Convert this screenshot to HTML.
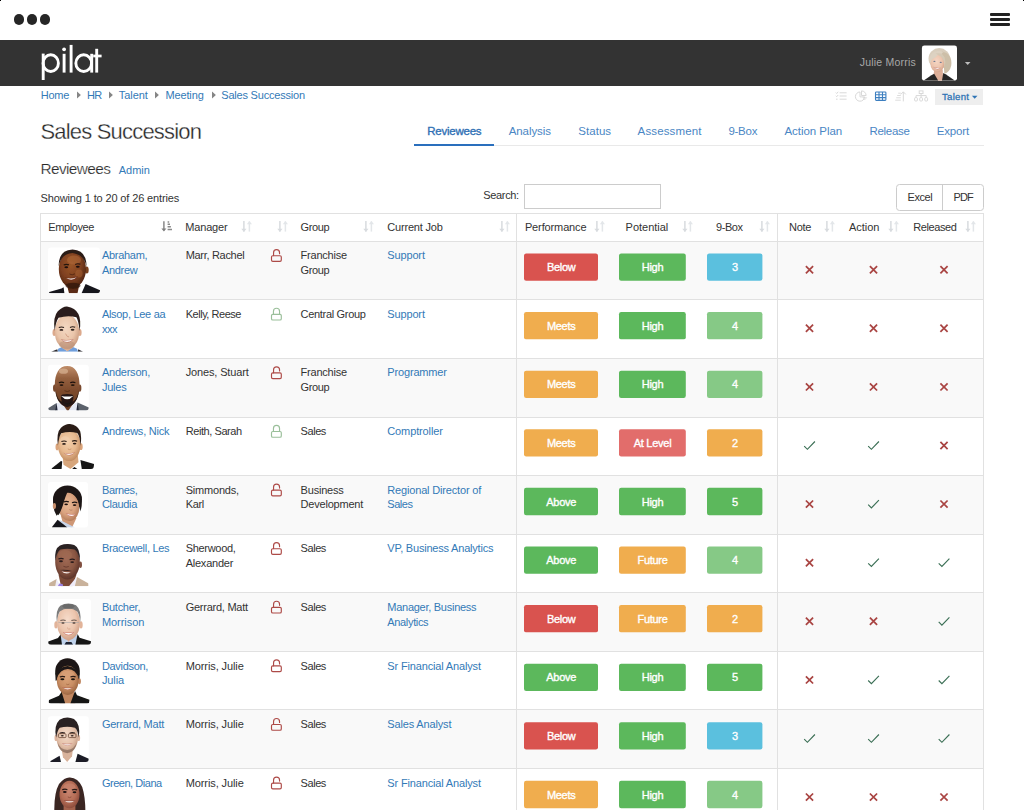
<!DOCTYPE html>
<html><head><meta charset="utf-8"><title>Sales Succession</title>
<style>
html,body{margin:0;padding:0;background:#fff;}
body{width:1024px;height:810px;overflow:hidden;position:relative;font-family:"Liberation Sans", sans-serif;}
.t{position:absolute;white-space:pre;line-height:1;font-family:"Liberation Sans", sans-serif;}
</style></head><body>
<div style="position:absolute;left:0;top:0;width:1024px;height:40px;background:#fff"></div>
<div style="position:absolute;left:13.8px;top:14.2px;width:10.4px;height:10.4px;border-radius:50%;background:#262626"></div>
<div style="position:absolute;left:26.8px;top:14.2px;width:10.4px;height:10.4px;border-radius:50%;background:#262626"></div>
<div style="position:absolute;left:39.8px;top:14.2px;width:10.4px;height:10.4px;border-radius:50%;background:#262626"></div>
<div style="position:absolute;left:990px;top:13px;width:20px;height:3px;border-radius:1px;background:#222"></div>
<div style="position:absolute;left:990px;top:18px;width:20px;height:3px;border-radius:1px;background:#222"></div>
<div style="position:absolute;left:990px;top:23px;width:20px;height:3px;border-radius:1px;background:#222"></div>
<div style="position:absolute;left:0;top:0;width:1px;height:1px;background:#000"></div>
<div style="position:absolute;left:1023px;top:0;width:1px;height:1px;background:#000"></div>
<div style="position:absolute;left:0;top:40px;width:1024px;height:45.7px;background:#333"></div>
<svg style="position:absolute;left:38px;top:42px" width="70" height="42" viewBox="38 42 70 42" fill="none" stroke="#fff" stroke-width="2.9">
<line x1="43.2" y1="53.6" x2="43.2" y2="80"/>
<ellipse cx="50.75" cy="63.15" rx="7.65" ry="8.4"/>
<line x1="64.1" y1="53.8" x2="64.1" y2="72.6"/>
<circle cx="64.1" cy="49.3" r="1.9" fill="#fff" stroke="none"/>
<line x1="71.1" y1="44.9" x2="71.1" y2="72.6"/>
<ellipse cx="83.7" cy="63.15" rx="7.85" ry="8.4"/>
<line x1="91.7" y1="53.8" x2="91.7" y2="72.6"/>
<line x1="96.7" y1="48.8" x2="96.7" y2="72.6"/>
<line x1="93.2" y1="56" x2="101.6" y2="56" stroke-width="2.7"/>
</svg>
<svg style="position:absolute;left:962px;top:59px" width="12" height="9" viewBox="962 59 12 9"><path d="M964.9 61.9H970.5L967.7 65.1Z" fill="#bdbdbd"/></svg>
<svg style="position:absolute;left:74.8px;top:89px" width="9" height="12" viewBox="74.8 89 9 12"><path d="M76.8 91.4V98.4L80.7 94.9Z" fill="#858585"/></svg>
<svg style="position:absolute;left:107.0px;top:89px" width="9" height="12" viewBox="107.0 89 9 12"><path d="M109.0 91.4V98.4L112.9 94.9Z" fill="#858585"/></svg>
<svg style="position:absolute;left:153.4px;top:89px" width="9" height="12" viewBox="153.4 89 9 12"><path d="M155.4 91.4V98.4L159.3 94.9Z" fill="#858585"/></svg>
<svg style="position:absolute;left:210.2px;top:89px" width="9" height="12" viewBox="210.2 89 9 12"><path d="M212.2 91.4V98.4L216.1 94.9Z" fill="#858585"/></svg>
<svg style="position:absolute;left:834px;top:88px" width="96" height="16" viewBox="834 88 96 16" fill="none" stroke="#d9d9d9" stroke-width="1">
<path d="M839.6 92.8H846.6M839.6 96H846.6M839.6 99.2H846.6"/>
<path d="M835.8 92.6l0.9 0.9 1.5-1.7M835.8 95.8l0.9 0.9 1.5-1.7M836 99.2h1.6"/>
<path d="M860 92 A4.6 4.6 0 1 0 864.6 96.9 L860 96.9Z"/>
<path d="M861.5 90.9 A4.6 4.6 0 0 1 866.1 95.5 L861.5 95.5Z"/>
<path d="M863 97.6h3.6l-1.8 2.2z" stroke-width="0.7"/>
<path d="M898.2 93.2H900.8M897.2 95.5H900.8M896.2 97.8H900.8M895.2 100.2H900.8" stroke-width="0.9"/>
<path d="M903.3 101.4V92M900.8 94.4l2.5-2.6 2.5 2.6"/>
<rect x="919.2" y="90.9" width="3.8" height="2.6"/>
<path d="M921.1 93.5V97.6M916 97.6V95.6H926.2V97.6"/>
<rect x="914.6" y="97.6" width="2.8" height="3.4" rx="1"/><rect x="919.7" y="97.6" width="2.8" height="3.4" rx="1"/><rect x="924.8" y="97.6" width="2.8" height="3.4" rx="1"/>
</svg>
<svg style="position:absolute;left:874px;top:90px" width="14" height="12" viewBox="874 90 14 12" fill="none" stroke="#3d7fc0" stroke-width="1.1">
<rect x="875.5" y="92" width="10.4" height="8.4" rx="0.8"/>
<path d="M879 92V100.4M882.5 92V100.4M875.5 94.8H885.9M875.5 97.6H885.9"/>
</svg>
<div style="position:absolute;left:935px;top:89px;width:48.4px;height:15.7px;background:#eee"></div>
<svg style="position:absolute;left:969px;top:93px" width="12" height="9" viewBox="969 93 12 9"><path d="M971.9 95.8H977.5L974.7 98.7Z" fill="#2f74b5"/></svg>
<div style="position:absolute;left:414px;top:144.5px;width:570px;height:1px;background:#e9e9e9"></div>
<div style="position:absolute;left:414px;top:143.5px;width:79.8px;height:2px;background:#2a6fbd"></div>
<div style="position:absolute;left:524px;top:184px;width:137px;height:25px;box-sizing:border-box;border:1px solid #ccc;background:#fff"></div>
<div style="position:absolute;left:896.3px;top:184.2px;width:87.3px;height:26.4px;box-sizing:border-box;border:1px solid #ccc;border-radius:3.5px;background:#fff"></div>
<div style="position:absolute;left:942.2px;top:184.2px;width:1px;height:26.4px;background:#ccc"></div>
<div style="position:absolute;left:40px;top:213px;width:944px;height:600px;background:#fff"></div>
<div style="position:absolute;left:40px;top:241px;width:944px;height:58px;background:#f9f9f9"></div>
<div style="position:absolute;left:40px;top:299px;width:944px;height:59px;background:#fff"></div>
<div style="position:absolute;left:40px;top:358px;width:944px;height:59px;background:#f9f9f9"></div>
<div style="position:absolute;left:40px;top:417px;width:944px;height:58px;background:#fff"></div>
<div style="position:absolute;left:40px;top:475px;width:944px;height:59px;background:#f9f9f9"></div>
<div style="position:absolute;left:40px;top:534px;width:944px;height:58px;background:#fff"></div>
<div style="position:absolute;left:40px;top:592px;width:944px;height:59px;background:#f9f9f9"></div>
<div style="position:absolute;left:40px;top:651px;width:944px;height:58px;background:#fff"></div>
<div style="position:absolute;left:40px;top:709px;width:944px;height:59px;background:#f9f9f9"></div>
<div style="position:absolute;left:40px;top:768px;width:944px;height:59px;background:#fff"></div>
<div style="position:absolute;left:40px;top:213px;width:944px;height:1px;background:#e1e1e1"></div>
<div style="position:absolute;left:40px;top:241px;width:944px;height:1px;background:#e1e1e1"></div>
<div style="position:absolute;left:40px;top:299px;width:944px;height:1px;background:#e1e1e1"></div>
<div style="position:absolute;left:40px;top:358px;width:944px;height:1px;background:#e1e1e1"></div>
<div style="position:absolute;left:40px;top:417px;width:944px;height:1px;background:#e1e1e1"></div>
<div style="position:absolute;left:40px;top:475px;width:944px;height:1px;background:#e1e1e1"></div>
<div style="position:absolute;left:40px;top:534px;width:944px;height:1px;background:#e1e1e1"></div>
<div style="position:absolute;left:40px;top:592px;width:944px;height:1px;background:#e1e1e1"></div>
<div style="position:absolute;left:40px;top:651px;width:944px;height:1px;background:#e1e1e1"></div>
<div style="position:absolute;left:40px;top:709px;width:944px;height:1px;background:#e1e1e1"></div>
<div style="position:absolute;left:40px;top:768px;width:944px;height:1px;background:#e1e1e1"></div>
<div style="position:absolute;left:40px;top:827px;width:944px;height:1px;background:#e1e1e1"></div>
<div style="position:absolute;left:40px;top:213px;width:1px;height:600px;background:#e1e1e1"></div>
<div style="position:absolute;left:516px;top:213px;width:1px;height:600px;background:#e1e1e1"></div>
<div style="position:absolute;left:777px;top:213px;width:1px;height:600px;background:#e1e1e1"></div>
<div style="position:absolute;left:983px;top:213px;width:1px;height:600px;background:#e1e1e1"></div>
<svg style="position:absolute;left:240px;top:219px" width="14" height="15" viewBox="240 219 14 15" fill="none" stroke-linecap="butt"><path d="M243.9 221V231.4" stroke="#d8dbdf" stroke-width="1.5"/><path d="M241.3 228.8H246.5L243.9 231.9Z" fill="#d8dbdf" stroke="none"/><path d="M249.4 231.6V221.4" stroke="#e3e6e9" stroke-width="1.5"/><path d="M246.8 224.2H252.0L249.4 221Z" fill="#e3e6e9" stroke="none"/></svg>
<svg style="position:absolute;left:275.5px;top:219px" width="14" height="15" viewBox="275.5 219 14 15" fill="none" stroke-linecap="butt"><path d="M279.4 221V231.4" stroke="#d8dbdf" stroke-width="1.5"/><path d="M276.79999999999995 228.8H282.0L279.4 231.9Z" fill="#d8dbdf" stroke="none"/><path d="M284.9 231.6V221.4" stroke="#e3e6e9" stroke-width="1.5"/><path d="M282.29999999999995 224.2H287.5L284.9 221Z" fill="#e3e6e9" stroke="none"/></svg>
<svg style="position:absolute;left:361.7px;top:219px" width="14" height="15" viewBox="361.7 219 14 15" fill="none" stroke-linecap="butt"><path d="M365.59999999999997 221V231.4" stroke="#d8dbdf" stroke-width="1.5"/><path d="M362.99999999999994 228.8H368.2L365.59999999999997 231.9Z" fill="#d8dbdf" stroke="none"/><path d="M371.09999999999997 231.6V221.4" stroke="#e3e6e9" stroke-width="1.5"/><path d="M368.49999999999994 224.2H373.7L371.09999999999997 221Z" fill="#e3e6e9" stroke="none"/></svg>
<svg style="position:absolute;left:497.6px;top:219px" width="14" height="15" viewBox="497.6 219 14 15" fill="none" stroke-linecap="butt"><path d="M501.5 221V231.4" stroke="#d8dbdf" stroke-width="1.5"/><path d="M498.9 228.8H504.1L501.5 231.9Z" fill="#d8dbdf" stroke="none"/><path d="M507.0 231.6V221.4" stroke="#e3e6e9" stroke-width="1.5"/><path d="M504.4 224.2H509.6L507.0 221Z" fill="#e3e6e9" stroke="none"/></svg>
<svg style="position:absolute;left:593.4px;top:219px" width="14" height="15" viewBox="593.4 219 14 15" fill="none" stroke-linecap="butt"><path d="M597.3 221V231.4" stroke="#d8dbdf" stroke-width="1.5"/><path d="M594.6999999999999 228.8H599.9L597.3 231.9Z" fill="#d8dbdf" stroke="none"/><path d="M602.8 231.6V221.4" stroke="#e3e6e9" stroke-width="1.5"/><path d="M600.1999999999999 224.2H605.4L602.8 221Z" fill="#e3e6e9" stroke="none"/></svg>
<svg style="position:absolute;left:681px;top:219px" width="14" height="15" viewBox="681 219 14 15" fill="none" stroke-linecap="butt"><path d="M684.9 221V231.4" stroke="#d8dbdf" stroke-width="1.5"/><path d="M682.3 228.8H687.5L684.9 231.9Z" fill="#d8dbdf" stroke="none"/><path d="M690.4 231.6V221.4" stroke="#e3e6e9" stroke-width="1.5"/><path d="M687.8 224.2H693.0L690.4 221Z" fill="#e3e6e9" stroke="none"/></svg>
<svg style="position:absolute;left:758px;top:219px" width="14" height="15" viewBox="758 219 14 15" fill="none" stroke-linecap="butt"><path d="M761.9 221V231.4" stroke="#d8dbdf" stroke-width="1.5"/><path d="M759.3 228.8H764.5L761.9 231.9Z" fill="#d8dbdf" stroke="none"/><path d="M767.4 231.6V221.4" stroke="#e3e6e9" stroke-width="1.5"/><path d="M764.8 224.2H770.0L767.4 221Z" fill="#e3e6e9" stroke="none"/></svg>
<svg style="position:absolute;left:823px;top:219px" width="14" height="15" viewBox="823 219 14 15" fill="none" stroke-linecap="butt"><path d="M826.9 221V231.4" stroke="#d8dbdf" stroke-width="1.5"/><path d="M824.3 228.8H829.5L826.9 231.9Z" fill="#d8dbdf" stroke="none"/><path d="M832.4 231.6V221.4" stroke="#e3e6e9" stroke-width="1.5"/><path d="M829.8 224.2H835.0L832.4 221Z" fill="#e3e6e9" stroke="none"/></svg>
<svg style="position:absolute;left:886.6px;top:219px" width="14" height="15" viewBox="886.6 219 14 15" fill="none" stroke-linecap="butt"><path d="M890.5 221V231.4" stroke="#d8dbdf" stroke-width="1.5"/><path d="M887.9 228.8H893.1L890.5 231.9Z" fill="#d8dbdf" stroke="none"/><path d="M896.0 231.6V221.4" stroke="#e3e6e9" stroke-width="1.5"/><path d="M893.4 224.2H898.6L896.0 221Z" fill="#e3e6e9" stroke="none"/></svg>
<svg style="position:absolute;left:963.9px;top:219px" width="14" height="15" viewBox="963.9 219 14 15" fill="none" stroke-linecap="butt"><path d="M967.8 221V231.4" stroke="#d8dbdf" stroke-width="1.5"/><path d="M965.1999999999999 228.8H970.4L967.8 231.9Z" fill="#d8dbdf" stroke="none"/><path d="M973.3 231.6V221.4" stroke="#e3e6e9" stroke-width="1.5"/><path d="M970.6999999999999 224.2H975.9L973.3 221Z" fill="#e3e6e9" stroke="none"/></svg>
<svg style="position:absolute;left:160px;top:219px" width="14" height="15" viewBox="160 219 14 15" fill="none">
<path d="M163.9 221.3V230.6" stroke="#808080" stroke-width="1.4"/><path d="M161.4 228.4H166.4L163.9 231.6Z" fill="#808080"/>
<path d="M167.6 222h1.6M167.6 224.3h2.4M167.6 226.7h3.3M167.6 229.6h4.4" stroke="#8a8a8a" stroke-width="1.5"/>
</svg>
<svg style="position:absolute;left:0;top:0" width="1024" height="810" viewBox="0 0 1024 810"><g transform="translate(921.9 45.6) scale(0.9915)">
<defs><clipPath id="uc"><rect x="0" y="0" width="35.4" height="35.4" rx="2.5"/></clipPath><filter id="ub"><feGaussianBlur stdDeviation="0.6"/></filter>
<radialGradient id="ug" cx="0.45" cy="0.4" r="0.65"><stop offset="0" stop-color="#f5d6c4"/><stop offset="0.6" stop-color="#ecc4ad"/><stop offset="1" stop-color="#cf9f88"/></radialGradient></defs>
<rect width="35.4" height="35.4" rx="2.5" fill="#fff"/>
<g clip-path="url(#uc)"><g filter="url(#ub)">
<path d="M12.5 24 L11 35.4 L21.5 35.4 L21 24Z" fill="#dcae98"/>
<path d="M1.5 35.4 L9.5 30 L12.4 28.4 L16.5 35.4Z" fill="#262626"/>
<path d="M20.2 35.4 L21.6 27.6 L24 29 L33.5 35.4Z" fill="#262626"/>
<ellipse cx="17.5" cy="13" rx="10.8" ry="10.5" fill="#d9cebd"/>
<path d="M20 6 Q31 8 29.6 20 Q28 27 22.6 28.4 L22 18Z" fill="#cdbfa8"/>
<ellipse cx="15.6" cy="17.6" rx="7.1" ry="9.3" fill="url(#ug)"/>
<path d="M7.3 13 Q11 2.6 22 6.6 Q16 8.5 13.5 12 Q10 13 8 18Z" fill="#ddd2c2"/>
<path d="M14 8 Q20 6.5 23 12 Q24.5 17 22.8 22 Q22.6 14 19 11 Q16 9.6 14 8Z" fill="#d5c9b5"/>
<ellipse cx="12.6" cy="15.9" rx="1.15" ry="0.6" fill="#6a7690"/><ellipse cx="19" cy="16.9" rx="1.15" ry="0.6" fill="#6a7690"/>
<path d="M11.2 21.4 Q15 23 19.2 22.4 Q15.4 26 11.2 21.4Z" fill="#c98478"/>
<path d="M12 21.9 Q15 23.2 18.4 22.7 Q15.4 25 12 21.9Z" fill="#fff"/>
</g></g></g>
<g fill="none" stroke="#ad4a47" stroke-width="1.15" stroke-linecap="round"><path d="M273.55 255.60V252.65a3 3 0 0 1 6 0V253.70"/><rect x="271.5" y="255.70" width="9.8" height="5.7" rx="1.3"/></g>
<rect x="524" y="253.45" width="74" height="27.3" rx="2.2" fill="#d9534f"/>
<rect x="619" y="253.45" width="66.8" height="27.3" rx="2.2" fill="#5cb85c"/>
<rect x="707" y="253.45" width="55.4" height="27.3" rx="2.2" fill="#5bc0de"/>
<path transform="translate(809.5 269.70)" d="M-3.6 -3.6L3.6 3.6M3.6 -3.6L-3.6 3.6" stroke="#a94442" stroke-width="1.75" fill="none"/>
<path transform="translate(873.5 269.70)" d="M-3.6 -3.6L3.6 3.6M3.6 -3.6L-3.6 3.6" stroke="#a94442" stroke-width="1.75" fill="none"/>
<path transform="translate(944.0 269.70)" d="M-3.6 -3.6L3.6 3.6M3.6 -3.6L-3.6 3.6" stroke="#a94442" stroke-width="1.75" fill="none"/>
<g transform="translate(48 247.50)"><defs><clipPath id="ac0"><rect width="52" height="45.7" rx="3"/></clipPath><filter id="ab0" x="-10%" y="-10%" width="120%" height="120%"><feGaussianBlur stdDeviation="0.6"/></filter><radialGradient id="rg0" cx="0.45" cy="0.4" r="0.62"><stop offset="0" stop-color="#9a5528"/><stop offset="0.6" stop-color="#7e4020"/><stop offset="1" stop-color="#4f2410"/></radialGradient></defs><rect width="52" height="45.7" rx="3" fill="#fff"/><g clip-path="url(#ac0)"><g filter="url(#ab0)">
<path d="M18 34 L21 45.7 L29.5 45.7 L32 34Z" fill="#5a2a12"/>
<ellipse cx="38.8" cy="22.5" rx="1.9" ry="3.6" fill="#7a3f1e"/>
<ellipse cx="24.4" cy="21.6" rx="13.6" ry="18.6" fill="url(#rg0)"/>
<ellipse cx="26" cy="12.5" rx="7" ry="4.5" fill="#b06a38" opacity="0.55"/>
<ellipse cx="31" cy="26" rx="3.6" ry="4" fill="#a96232" opacity="0.5"/>
<path d="M10.6 19 Q10.4 2.4 24.5 2 Q38.8 2.4 38.6 20 Q36.8 7 24.5 5.4 Q13 6.2 10.6 19Z" fill="#2b1b16"/>
<ellipse cx="18.3" cy="19.8" rx="1.9" ry="1.0" fill="#1b0f0a"/><path d="M15.700000000000001 17.5Q18.3 16.3 20.900000000000002 17.4" stroke="#24140e" stroke-width="1.15" fill="none"/><ellipse cx="29.8" cy="19.2" rx="1.9" ry="1.0" fill="#1b0f0a"/><path d="M27.2 16.9Q29.8 15.699999999999998 32.4 16.799999999999997" stroke="#24140e" stroke-width="1.15" fill="none"/>
<path d="M21.5 26.5 Q24 28.2 27 26.3" stroke="#5b2a12" stroke-width="1" fill="none"/>
<path d="M16.8 30 Q23 31.2 30.2 28.8 Q24.5 36.5 16.8 30Z" fill="#6a2d1c"/>
<path d="M18.2 30.6 Q23.5 31.8 28.8 29.8 Q24 34.2 18.2 30.6Z" fill="#f3e7e0"/>
<ellipse cx="25" cy="38.2" rx="7.5" ry="3" fill="#2e150b" opacity="0.7"/>
<path d="M0.6 45.7 L1.2 44.6 L13.5 41 L15.6 39.8 L16.4 45.7Z" fill="#15151c"/>
<path d="M33.6 45.7 L37.6 36.4 L52 42.8 L52 45.7Z" fill="#15151c"/>
</g></g></g>
<g fill="none" stroke="#9abf9a" stroke-width="1.15" stroke-linecap="round"><path d="M273.45 314.20V311.30a3.05 3.05 0 0 1 6.1 0V314.20"/><rect x="271.5" y="314.30" width="9.8" height="5.7" rx="1.3"/></g>
<rect x="524" y="312.05" width="74" height="27.3" rx="2.2" fill="#f0ad4e"/>
<rect x="619" y="312.05" width="66.8" height="27.3" rx="2.2" fill="#5cb85c"/>
<rect x="707" y="312.05" width="55.4" height="27.3" rx="2.2" fill="#86c986"/>
<path transform="translate(809.5 328.30)" d="M-3.6 -3.6L3.6 3.6M3.6 -3.6L-3.6 3.6" stroke="#a94442" stroke-width="1.75" fill="none"/>
<path transform="translate(873.5 328.30)" d="M-3.6 -3.6L3.6 3.6M3.6 -3.6L-3.6 3.6" stroke="#a94442" stroke-width="1.75" fill="none"/>
<path transform="translate(944.0 328.30)" d="M-3.6 -3.6L3.6 3.6M3.6 -3.6L-3.6 3.6" stroke="#a94442" stroke-width="1.75" fill="none"/>
<g transform="translate(48 306.10)"><defs><clipPath id="ac1"><rect width="40" height="45.7" rx="3"/></clipPath><filter id="ab1" x="-10%" y="-10%" width="120%" height="120%"><feGaussianBlur stdDeviation="0.6"/></filter><radialGradient id="rg1" cx="0.45" cy="0.4" r="0.62"><stop offset="0" stop-color="#f4d8c2"/><stop offset="0.6" stop-color="#eac5aa"/><stop offset="1" stop-color="#c99a7e"/></radialGradient></defs><g clip-path="url(#ac1)"><g filter="url(#ab1)">
<path d="M9.5 45.7 L10.2 42.6 L14 41 L19 44.8 L25 40.8 L29 42.6 L30 45.7Z" fill="#6f9fdc"/>
<path d="M3.2 45.7 L9.3 43.2 L9.8 45.7Z" fill="#2d2d33"/><path d="M29.8 45.7 L30.3 43.2 L35 45.7Z" fill="#2d2d33"/>
<path d="M13 36 L14 42 L19.5 45.2 L25 41.5 L26 36Z" fill="#d9ab8e"/>
<ellipse cx="6.2" cy="26.5" rx="1.7" ry="3.5" fill="#dca98c"/><ellipse cx="31.9" cy="26.5" rx="1.7" ry="3.5" fill="#dca98c"/>
<ellipse cx="19" cy="25.8" rx="12.2" ry="17.2" fill="url(#rg1)"/>
<ellipse cx="19" cy="38.6" rx="8" ry="4" fill="#b89079" opacity="0.55"/>
<path d="M6.6 25 Q4.8 10.5 9.8 5.2 Q15 0.2 19 0.5 Q27.2 1.8 30.4 8 Q33.4 14 31.6 25 Q30.6 14.5 28.4 11.2 Q20 8.8 10.6 11.6 Q7.8 15.4 6.6 25Z" fill="#2c1f1b"/>
<ellipse cx="13.4" cy="23.8" rx="1.9" ry="0.95" fill="#2e211c"/><path d="M10.8 21.5Q13.4 20.3 16.0 21.4" stroke="#2a1d18" stroke-width="1.15" fill="none"/><ellipse cx="24.6" cy="23.6" rx="1.9" ry="0.95" fill="#2e211c"/><path d="M22.0 21.3Q24.6 20.1 27.200000000000003 21.2" stroke="#2a1d18" stroke-width="1.15" fill="none"/>
<path d="M17.5 27.5 Q19 31.3 21 30.8" stroke="#cf9c82" stroke-width="0.9" fill="none"/>
<path d="M12.6 33.2 Q19 34.6 25.8 32.8 Q19.5 40 12.6 33.2Z" fill="#bd7565"/>
<path d="M13.8 33.8 Q19 35 24.8 33.4 Q19.4 38.2 13.8 33.8Z" fill="#fbf5f2"/>
</g></g></g>
<g fill="none" stroke="#ad4a47" stroke-width="1.15" stroke-linecap="round"><path d="M273.55 372.80V369.85a3 3 0 0 1 6 0V370.90"/><rect x="271.5" y="372.90" width="9.8" height="5.7" rx="1.3"/></g>
<rect x="524" y="370.65" width="74" height="27.3" rx="2.2" fill="#f0ad4e"/>
<rect x="619" y="370.65" width="66.8" height="27.3" rx="2.2" fill="#5cb85c"/>
<rect x="707" y="370.65" width="55.4" height="27.3" rx="2.2" fill="#86c986"/>
<path transform="translate(809.5 386.90)" d="M-3.6 -3.6L3.6 3.6M3.6 -3.6L-3.6 3.6" stroke="#a94442" stroke-width="1.75" fill="none"/>
<path transform="translate(873.5 386.90)" d="M-3.6 -3.6L3.6 3.6M3.6 -3.6L-3.6 3.6" stroke="#a94442" stroke-width="1.75" fill="none"/>
<path transform="translate(944.0 386.90)" d="M-3.6 -3.6L3.6 3.6M3.6 -3.6L-3.6 3.6" stroke="#a94442" stroke-width="1.75" fill="none"/>
<g transform="translate(48 364.70)"><defs><clipPath id="ac2"><rect width="40.8" height="45.7" rx="3"/></clipPath><filter id="ab2" x="-10%" y="-10%" width="120%" height="120%"><feGaussianBlur stdDeviation="0.6"/></filter></defs><rect width="40.8" height="45.7" rx="3" fill="#fff"/><g clip-path="url(#ac2)"><g filter="url(#ab2)">
<defs><linearGradient id="g2" x1="0" y1="0" x2="0" y2="1"><stop offset="0" stop-color="#bf8c68"/><stop offset="0.3" stop-color="#94603f"/><stop offset="0.6" stop-color="#7d4b2d"/><stop offset="1" stop-color="#6d3f25"/></linearGradient></defs>
<path d="M8.4 38.6 L29.6 38 L29.6 45.7 L8.4 45.7Z" fill="#e3e7f3"/>
<path d="M12.5 36 L19 45.7 L20.5 45.7 L27 36Z" fill="#6d3f25"/>
<ellipse cx="6.6" cy="23.4" rx="1.6" ry="3.6" fill="#7a4a2e"/><ellipse cx="31.8" cy="23.4" rx="1.6" ry="3.6" fill="#7a4a2e"/>
<path d="M19.2 1.4 C27.5 1.4 31.4 9 31.6 20 C31.8 31 27 41.8 19.2 41.8 C11.4 41.8 6.6 31 6.8 20 C7 9 10.9 1.4 19.2 1.4Z" fill="url(#g2)"/><ellipse cx="15.5" cy="6.5" rx="4.5" ry="2.6" fill="#d8b394" opacity="0.7"/>
<path d="M7.6 25 Q8 39 19.2 42.6 Q30.4 39 30.8 25 Q29.4 35 24.6 37 Q26.6 31 24 29.9 Q19.2 28.6 14.4 29.9 Q11.8 31 13.8 37 Q9 35 7.6 25Z" fill="#1f1512" opacity="0.92"/><path d="M13.8 36 Q19.2 40.4 24.6 36 Q19.2 44 13.8 36Z" fill="#1f1512"/>
<ellipse cx="13.5" cy="20.4" rx="1.9" ry="0.9" fill="#1e120d"/><path d="M10.9 18.099999999999998Q13.5 16.9 16.1 17.999999999999996" stroke="#1e120d" stroke-width="1.15" fill="none"/><ellipse cx="24.8" cy="20.4" rx="1.9" ry="0.9" fill="#1e120d"/><path d="M22.2 18.099999999999998Q24.8 16.9 27.400000000000002 17.999999999999996" stroke="#1e120d" stroke-width="1.15" fill="none"/>
<path d="M16.5 26 Q19.2 27.6 22 26" stroke="#5a3018" stroke-width="1" fill="none"/>
<path d="M13.2 31.3 Q19.2 32.4 25.2 31.3 Q19.2 38 13.2 31.3Z" fill="#fff"/>
<path d="M0 45.7 L0.4 43.4 L8.6 38.4 L8.2 45.7Z" fill="#5b626c"/><path d="M7.2 45.7 L8.6 38.4 L9.6 45.7Z" fill="#232838"/>
<path d="M29.4 45.7 L29.6 37.8 L40.8 42.8 L40.8 45.7Z" fill="#5b626c"/><path d="M28.4 45.7 L29.6 37.8 L30.8 45.7Z" fill="#232838"/>
</g></g></g>
<g fill="none" stroke="#9abf9a" stroke-width="1.15" stroke-linecap="round"><path d="M273.45 431.40V428.50a3.05 3.05 0 0 1 6.1 0V431.40"/><rect x="271.5" y="431.50" width="9.8" height="5.7" rx="1.3"/></g>
<rect x="524" y="429.25" width="74" height="27.3" rx="2.2" fill="#f0ad4e"/>
<rect x="619" y="429.25" width="66.8" height="27.3" rx="2.2" fill="#e26d6b"/>
<rect x="707" y="429.25" width="55.4" height="27.3" rx="2.2" fill="#f0ad4e"/>
<path transform="translate(809.5 445.50)" d="M-5.3 0.6L-2.1 3.8L5.4 -4.0" stroke="#3b6f55" stroke-width="1.15" fill="none"/>
<path transform="translate(873.5 445.50)" d="M-5.3 0.6L-2.1 3.8L5.4 -4.0" stroke="#3b6f55" stroke-width="1.15" fill="none"/>
<path transform="translate(944.0 445.50)" d="M-3.6 -3.6L3.6 3.6M3.6 -3.6L-3.6 3.6" stroke="#a94442" stroke-width="1.75" fill="none"/>
<g transform="translate(48 423.30)"><defs><clipPath id="ac3"><rect width="46" height="45.7" rx="3"/></clipPath><filter id="ab3" x="-10%" y="-10%" width="120%" height="120%"><feGaussianBlur stdDeviation="0.6"/></filter><radialGradient id="rg3" cx="0.45" cy="0.4" r="0.62"><stop offset="0" stop-color="#f3cfaa"/><stop offset="0.6" stop-color="#e6b88e"/><stop offset="1" stop-color="#c08a5f"/></radialGradient></defs><g clip-path="url(#ac3)"><g filter="url(#ab3)">
<path d="M14.5 32 L15.5 41.5 L22.5 45.7 L30.5 39 L29.8 32Z" fill="#d7a67b"/>
<ellipse cx="9.2" cy="23.6" rx="1.7" ry="3.4" fill="#dba57c"/><ellipse cx="33" cy="23.4" rx="1.7" ry="3.4" fill="#dba57c"/>
<ellipse cx="21.2" cy="21.8" rx="11.3" ry="16" fill="url(#rg3)"/>
<ellipse cx="17" cy="17" rx="5" ry="4" fill="#f1cfae" opacity="0.7"/>
<path d="M9.9 22.5 Q8.2 9 13 4.4 Q18 0.2 22 0.8 Q29.2 1.6 32.2 8 Q33.8 14 32.6 22.5 Q31.8 12.4 29.2 9.6 Q21 7.4 13.2 10 Q10.8 14 9.9 22.5Z" fill="#2a1c15"/>
<ellipse cx="16" cy="20.6" rx="1.8" ry="0.9" fill="#2c1e18"/><path d="M13.4 18.3Q16 17.1 18.6 18.2" stroke="#2a1c15" stroke-width="1.15" fill="none"/><ellipse cx="26.6" cy="20.3" rx="1.8" ry="0.9" fill="#2c1e18"/><path d="M24.0 18.0Q26.6 16.8 29.200000000000003 17.9" stroke="#2a1c15" stroke-width="1.15" fill="none"/>
<path d="M19.8 25.6 Q21.4 27 23.4 25.6" stroke="#c8946c" stroke-width="0.9" fill="none"/>
<path d="M15.2 29.4 Q21.5 30.8 27.4 28.6 Q21.8 35.4 15.2 29.4Z" fill="#c67c63"/>
<path d="M16.2 29.9 Q21.5 31.2 26.6 29.2 Q21.6 33.8 16.2 29.9Z" fill="#fdf8f5"/>
<path d="M3.6 45.7 L4.2 44.8 L13 37.6 L14.2 38.2 L13.6 45.7Z" fill="#141414"/>
<path d="M33.8 45.7 L32.4 36.6 L46 40.6 L45.6 45.7Z" fill="#141414"/>
<path d="M24.2 45.7 L26.4 43.8 L29.4 45.7Z" fill="#111"/>
</g></g></g>
<g fill="none" stroke="#ad4a47" stroke-width="1.15" stroke-linecap="round"><path d="M273.55 490.00V487.05a3 3 0 0 1 6 0V488.10"/><rect x="271.5" y="490.10" width="9.8" height="5.7" rx="1.3"/></g>
<rect x="524" y="487.85" width="74" height="27.3" rx="2.2" fill="#5cb85c"/>
<rect x="619" y="487.85" width="66.8" height="27.3" rx="2.2" fill="#5cb85c"/>
<rect x="707" y="487.85" width="55.4" height="27.3" rx="2.2" fill="#5cb85c"/>
<path transform="translate(809.5 504.10)" d="M-3.6 -3.6L3.6 3.6M3.6 -3.6L-3.6 3.6" stroke="#a94442" stroke-width="1.75" fill="none"/>
<path transform="translate(873.5 504.10)" d="M-5.3 0.6L-2.1 3.8L5.4 -4.0" stroke="#3b6f55" stroke-width="1.15" fill="none"/>
<path transform="translate(944.0 504.10)" d="M-3.6 -3.6L3.6 3.6M3.6 -3.6L-3.6 3.6" stroke="#a94442" stroke-width="1.75" fill="none"/>
<g transform="translate(48 481.90)"><defs><clipPath id="ac4"><rect width="40" height="45.7" rx="3"/></clipPath><filter id="ab4" x="-10%" y="-10%" width="120%" height="120%"><feGaussianBlur stdDeviation="0.6"/></filter><radialGradient id="rg4" cx="0.45" cy="0.4" r="0.62"><stop offset="0" stop-color="#e8b894"/><stop offset="0.6" stop-color="#d9a27f"/><stop offset="1" stop-color="#b27a58"/></radialGradient></defs><rect width="40" height="45.7" rx="3" fill="#fff"/><g clip-path="url(#ac4)"><g filter="url(#ab4)">
<path d="M13 34 L15.5 43.5 L24 45.7 L28.5 36Z" fill="#cf9876"/>
<ellipse cx="19.5" cy="17.6" rx="14.5" ry="14" fill="#1d1715"/>
<path d="M5.2 17 Q4.6 28 8.6 33.8 L13 29 L9 18Z" fill="#1d1715"/>
<ellipse cx="6.4" cy="24.2" rx="1.6" ry="3" fill="#c98f6d"/>
<ellipse cx="20.8" cy="25" rx="10.4" ry="14.2" fill="url(#rg4)" transform="rotate(-6 20.8 25)"/>
<path d="M8.4 24 Q9.6 9.4 20.6 8 Q17.4 13.6 15 23 Q12.6 30 10.6 33.4 Q7.8 30.4 8.4 24Z" fill="#1d1715"/>
<path d="M20 8 Q30.6 8 33.6 19.6 Q34.2 26 32 29.6 Q31.6 17.6 26.4 13.2 Q22.4 11 20 8Z" fill="#1d1715"/>
<ellipse cx="18.2" cy="22.4" rx="1.8" ry="0.9" fill="#1a100c"/><path d="M15.6 20.099999999999998Q18.2 18.9 20.8 19.999999999999996" stroke="#1d1715" stroke-width="1.15" fill="none"/><ellipse cx="26.6" cy="23.2" rx="1.8" ry="0.9" fill="#1a100c"/><path d="M24.0 20.9Q26.6 19.7 29.200000000000003 20.799999999999997" stroke="#1d1715" stroke-width="1.15" fill="none"/>
<path d="M21.4 27.6 Q22.8 29 24.4 28" stroke="#b98262" stroke-width="0.9" fill="none"/>
<path d="M17.6 31.2 Q23 33.4 27.8 32.2 Q23 37.6 17.6 31.2Z" fill="#c7736a"/>
<path d="M18.6 31.8 Q23 33.6 27 32.6 Q23 36 18.6 31.8Z" fill="#fdf6f4"/>
<path d="M10.4 38 L14 39 L27 45.7 L18.5 45.7Z" fill="#c9d6ea"/>
<path d="M3.8 45.7 L4.4 44.6 L9.6 37.8 L19.4 45.7Z" fill="#17151a"/>
</g></g></g>
<g fill="none" stroke="#ad4a47" stroke-width="1.15" stroke-linecap="round"><path d="M273.55 548.60V545.65a3 3 0 0 1 6 0V546.70"/><rect x="271.5" y="548.70" width="9.8" height="5.7" rx="1.3"/></g>
<rect x="524" y="546.45" width="74" height="27.3" rx="2.2" fill="#5cb85c"/>
<rect x="619" y="546.45" width="66.8" height="27.3" rx="2.2" fill="#f0ad4e"/>
<rect x="707" y="546.45" width="55.4" height="27.3" rx="2.2" fill="#86c986"/>
<path transform="translate(809.5 562.70)" d="M-3.6 -3.6L3.6 3.6M3.6 -3.6L-3.6 3.6" stroke="#a94442" stroke-width="1.75" fill="none"/>
<path transform="translate(873.5 562.70)" d="M-5.3 0.6L-2.1 3.8L5.4 -4.0" stroke="#3b6f55" stroke-width="1.15" fill="none"/>
<path transform="translate(944.0 562.70)" d="M-5.3 0.6L-2.1 3.8L5.4 -4.0" stroke="#3b6f55" stroke-width="1.15" fill="none"/>
<g transform="translate(48 540.50)"><defs><clipPath id="ac5"><rect width="42" height="45.7" rx="3"/></clipPath><filter id="ab5" x="-10%" y="-10%" width="120%" height="120%"><feGaussianBlur stdDeviation="0.6"/></filter><radialGradient id="rg5" cx="0.45" cy="0.4" r="0.62"><stop offset="0" stop-color="#a06a55"/><stop offset="0.6" stop-color="#8a5743"/><stop offset="1" stop-color="#5a3228"/></radialGradient></defs><g clip-path="url(#ac5)"><g filter="url(#ab5)">
<path d="M10.5 34 L13 45.7 L24.5 45.7 L28.5 34Z" fill="#7c4b39"/>
<ellipse cx="32.4" cy="24.2" rx="1.6" ry="3.3" fill="#815040"/>
<ellipse cx="19.5" cy="21.6" rx="12.3" ry="17.4" fill="url(#rg5)"/>
<ellipse cx="17" cy="14.5" rx="7" ry="5" fill="#a06a53" opacity="0.7"/>
<path d="M7.2 20.5 Q6.2 8 12 5 Q19 2.4 26.2 4.6 Q32.4 7.6 32 20.5 Q30.2 11 26.6 9 Q19 7.6 12.4 9 Q8.6 12 7.2 20.5Z" fill="#2a2024"/>
<ellipse cx="13" cy="20.8" rx="1.9" ry="0.95" fill="#2a1a1c"/><path d="M10.4 18.5Q13 17.3 15.6 18.4" stroke="#2a1c1e" stroke-width="1.15" fill="none"/><ellipse cx="24.2" cy="21.6" rx="1.9" ry="0.95" fill="#2a1a1c"/><path d="M21.599999999999998 19.3Q24.2 18.1 26.8 19.2" stroke="#2a1c1e" stroke-width="1.15" fill="none"/>
<path d="M15.4 25.8 Q18 27.4 20.8 26" stroke="#6a3e30" stroke-width="1" fill="none"/>
<path d="M11.8 29.4 Q18 28.6 24 30.4 Q18.4 31 11.8 29.4Z" fill="#3a2422"/>
<path d="M12.4 30.2 Q18 31.8 23.6 31 Q18.2 36.4 12.4 30.2Z" fill="#6d3a30"/>
<path d="M13.4 30.8 Q18 32.2 22.8 31.6 Q18 35 13.4 30.8Z" fill="#fbf3ee"/>
<path d="M8.6 38.4 L12.4 45.7 L7 45.7Z" fill="#efecf9"/><path d="M28.6 36.6 L26.8 45.7 L21 45.7Z" fill="#efecf9"/>
<path d="M9.8 45.7 L11.4 43 L14.6 43.4 L15.2 45.7Z" fill="#9a80e0"/>
<path d="M0.8 45.7 L1.4 42.6 L8.6 38.4 L7.2 45.7Z" fill="#c9b29b"/>
<path d="M26.8 45.7 L29 36.4 L40.2 42.8 L40.4 45.7Z" fill="#c9b29b"/>
</g></g></g>
<g fill="none" stroke="#ad4a47" stroke-width="1.15" stroke-linecap="round"><path d="M273.55 607.20V604.25a3 3 0 0 1 6 0V605.30"/><rect x="271.5" y="607.30" width="9.8" height="5.7" rx="1.3"/></g>
<rect x="524" y="605.05" width="74" height="27.3" rx="2.2" fill="#d9534f"/>
<rect x="619" y="605.05" width="66.8" height="27.3" rx="2.2" fill="#f0ad4e"/>
<rect x="707" y="605.05" width="55.4" height="27.3" rx="2.2" fill="#f0ad4e"/>
<path transform="translate(809.5 621.30)" d="M-3.6 -3.6L3.6 3.6M3.6 -3.6L-3.6 3.6" stroke="#a94442" stroke-width="1.75" fill="none"/>
<path transform="translate(873.5 621.30)" d="M-3.6 -3.6L3.6 3.6M3.6 -3.6L-3.6 3.6" stroke="#a94442" stroke-width="1.75" fill="none"/>
<path transform="translate(944.0 621.30)" d="M-5.3 0.6L-2.1 3.8L5.4 -4.0" stroke="#3b6f55" stroke-width="1.15" fill="none"/>
<g transform="translate(48 599.10)"><defs><clipPath id="ac6"><rect width="43" height="45.7" rx="3"/></clipPath><filter id="ab6" x="-10%" y="-10%" width="120%" height="120%"><feGaussianBlur stdDeviation="0.6"/></filter><radialGradient id="rg6" cx="0.45" cy="0.4" r="0.62"><stop offset="0" stop-color="#f6dccb"/><stop offset="0.6" stop-color="#ecc5ad"/><stop offset="1" stop-color="#cf9f86"/></radialGradient></defs><rect width="43" height="45.7" rx="3" fill="#fff"/><g clip-path="url(#ac6)"><g filter="url(#ab6)">
<path d="M12 37 L29 36 L29.6 45.7 L12.6 45.7Z" fill="#bed1ea"/>
<path d="M14.6 35 L20.6 43 L26.4 35Z" fill="#dcae95"/>
<path d="M16.4 45.7 L18 42.8 L23.4 42.8 L25 45.7Z" fill="#1c2230"/>
<ellipse cx="8" cy="25.8" rx="1.7" ry="3.6" fill="#e2b49a"/><ellipse cx="33" cy="25.8" rx="1.7" ry="3.6" fill="#e2b49a"/>
<ellipse cx="20.5" cy="24" rx="11.4" ry="17" fill="url(#rg6)"/>
<path d="M8.9 23.5 Q7.2 11 12.2 6.6 Q20 2.6 28 6.2 Q33.8 11 32.2 23.5 Q31.6 16 29.2 12.4 Q25.6 9.6 20.5 9.4 Q15.4 9.6 11.8 12.4 Q9.6 16 8.9 23.5Z" fill="#7c7c7c"/><ellipse cx="20.5" cy="7.2" rx="6" ry="2.4" fill="#6a6a6a"/>
<path d="M10.4 23.4 H31" stroke="#a9a9a9" stroke-width="0.6"/>
<ellipse cx="15" cy="23.8" rx="1.6" ry="0.75" fill="#4b3a33"/><path d="M12.4 21.5Q15 20.3 17.6 21.4" stroke="#6b5a52" stroke-width="1.15" fill="none"/><ellipse cx="26" cy="23.8" rx="1.6" ry="0.75" fill="#4b3a33"/><path d="M23.4 21.5Q26 20.3 28.6 21.4" stroke="#6b5a52" stroke-width="1.15" fill="none"/>
<path d="M19 28.5 Q20.5 30.8 22.4 29.8" stroke="#d7a68c" stroke-width="0.9" fill="none"/>
<path d="M14.8 32.8 Q20.5 34 26.2 32.8 Q20.5 39.6 14.8 32.8Z" fill="#c9766a"/>
<path d="M15.8 33.4 Q20.5 34.4 25.2 33.4 Q20.5 38 15.8 33.4Z" fill="#fdf8f6"/>
<path d="M0 45.7 L0.3 42.4 L10 39 L12.6 35.4 L14 45.7Z" fill="#161616"/>
<path d="M27.4 45.7 L29.6 35 L31.6 38.6 L43 42.2 L43 45.7Z" fill="#161616"/>
</g></g></g>
<g fill="none" stroke="#ad4a47" stroke-width="1.15" stroke-linecap="round"><path d="M273.55 665.80V662.85a3 3 0 0 1 6 0V663.90"/><rect x="271.5" y="665.90" width="9.8" height="5.7" rx="1.3"/></g>
<rect x="524" y="663.65" width="74" height="27.3" rx="2.2" fill="#5cb85c"/>
<rect x="619" y="663.65" width="66.8" height="27.3" rx="2.2" fill="#5cb85c"/>
<rect x="707" y="663.65" width="55.4" height="27.3" rx="2.2" fill="#5cb85c"/>
<path transform="translate(809.5 679.90)" d="M-3.6 -3.6L3.6 3.6M3.6 -3.6L-3.6 3.6" stroke="#a94442" stroke-width="1.75" fill="none"/>
<path transform="translate(873.5 679.90)" d="M-5.3 0.6L-2.1 3.8L5.4 -4.0" stroke="#3b6f55" stroke-width="1.15" fill="none"/>
<path transform="translate(944.0 679.90)" d="M-5.3 0.6L-2.1 3.8L5.4 -4.0" stroke="#3b6f55" stroke-width="1.15" fill="none"/>
<g transform="translate(48 657.70)"><defs><clipPath id="ac7"><rect width="42" height="45.7" rx="3"/></clipPath><filter id="ab7" x="-10%" y="-10%" width="120%" height="120%"><feGaussianBlur stdDeviation="0.6"/></filter><radialGradient id="rg7" cx="0.45" cy="0.4" r="0.62"><stop offset="0" stop-color="#dba479"/><stop offset="0.6" stop-color="#c88d63"/><stop offset="1" stop-color="#9a6440"/></radialGradient></defs><g clip-path="url(#ac7)"><g filter="url(#ab7)">
<path d="M13.4 32 L11.6 45.7 L27.4 45.7 L25.8 32Z" fill="#c08760"/>
<ellipse cx="19.5" cy="13.2" rx="12.3" ry="12.6" fill="#1c1816"/>
<path d="M7.2 13 L7.6 23 L10 22Z" fill="#1c1816"/><path d="M31.8 13 L31.4 22.5 L29.5 22Z" fill="#1c1816"/>
<ellipse cx="31.4" cy="23.6" rx="1.5" ry="3" fill="#bf855e"/>
<ellipse cx="19.7" cy="22.6" rx="10.9" ry="14.6" fill="url(#rg7)"/>
<ellipse cx="19.7" cy="17" rx="6.5" ry="4" fill="#d8a178" opacity="0.7"/>
<path d="M8.7 21 Q8.8 9.4 19.6 8.2 Q30.4 9.4 30.8 21 Q28 11.8 19.8 11.4 Q12 11.8 8.7 21Z" fill="#1c1816"/>
<ellipse cx="14.4" cy="21.6" rx="2.0" ry="1.05" fill="#1e1410"/><path d="M11.8 19.3Q14.4 18.1 17.0 19.2" stroke="#2a1c16" stroke-width="1.15" fill="none"/><ellipse cx="25" cy="21.6" rx="2.0" ry="1.05" fill="#1e1410"/><path d="M22.4 19.3Q25 18.1 27.6 19.2" stroke="#2a1c16" stroke-width="1.15" fill="none"/>
<path d="M18.2 26.4 Q19.8 27.6 21.4 26.4" stroke="#a9704a" stroke-width="0.9" fill="none"/>
<path d="M14 29.4 Q19.6 30.6 25.2 29.4 Q19.6 35.4 14 29.4Z" fill="#b0604c"/>
<path d="M15 30 Q19.6 31 24.2 30 Q19.6 33.6 15 30Z" fill="#fbf3ee"/>
<path d="M0.6 45.7 L1 42.4 L11 38 L13.6 34.4 L17.2 45.7Z" fill="#161512"/>
<path d="M22.4 45.7 L27 33.4 L29 37.6 L41.4 42 L41 45.7Z" fill="#161512"/>
</g></g></g>
<g fill="none" stroke="#ad4a47" stroke-width="1.15" stroke-linecap="round"><path d="M273.55 724.40V721.45a3 3 0 0 1 6 0V722.50"/><rect x="271.5" y="724.50" width="9.8" height="5.7" rx="1.3"/></g>
<rect x="524" y="722.25" width="74" height="27.3" rx="2.2" fill="#d9534f"/>
<rect x="619" y="722.25" width="66.8" height="27.3" rx="2.2" fill="#5cb85c"/>
<rect x="707" y="722.25" width="55.4" height="27.3" rx="2.2" fill="#5bc0de"/>
<path transform="translate(809.5 738.50)" d="M-5.3 0.6L-2.1 3.8L5.4 -4.0" stroke="#3b6f55" stroke-width="1.15" fill="none"/>
<path transform="translate(873.5 738.50)" d="M-5.3 0.6L-2.1 3.8L5.4 -4.0" stroke="#3b6f55" stroke-width="1.15" fill="none"/>
<path transform="translate(944.0 738.50)" d="M-5.3 0.6L-2.1 3.8L5.4 -4.0" stroke="#3b6f55" stroke-width="1.15" fill="none"/>
<g transform="translate(48 716.30)"><defs><clipPath id="ac8"><rect width="40.8" height="45.7" rx="3"/></clipPath><filter id="ab8" x="-10%" y="-10%" width="120%" height="120%"><feGaussianBlur stdDeviation="0.6"/></filter><radialGradient id="rg8" cx="0.45" cy="0.4" r="0.62"><stop offset="0" stop-color="#f3d9c7"/><stop offset="0.6" stop-color="#e6c3ac"/><stop offset="1" stop-color="#c49c85"/></radialGradient></defs><rect width="40.8" height="45.7" rx="3" fill="#fff"/><g clip-path="url(#ac8)"><g filter="url(#ab8)">
<path d="M13.4 32 L15 41 L19.2 45.7 L24 40 L25 32Z" fill="#d8b29b"/>
<ellipse cx="8" cy="21.6" rx="1.5" ry="3.2" fill="#dcb39d"/><ellipse cx="30.6" cy="21.6" rx="1.5" ry="3.2" fill="#dcb39d"/>
<ellipse cx="19.2" cy="21.2" rx="10.7" ry="15.6" fill="url(#rg8)"/>
<path d="M9.6 26 Q10.6 35.5 19.2 36.9 Q27.8 35.5 28.8 26 Q26.6 33.2 19.2 33.6 Q11.8 33.2 9.6 26Z" fill="#6e554a" opacity="0.55"/>
<path d="M8.1 21.5 Q5.6 9 11.6 3.4 Q19 -0.6 26 2.8 Q33 8 30.8 21.5 Q29.8 14 27 11.4 Q19 9.4 11.8 11.4 Q9.4 14 8.1 21.5Z" fill="#2a2120"/>
<ellipse cx="14.3" cy="19.5" rx="1.5" ry="0.75" fill="#3a2a25"/><path d="M11.700000000000001 16.900000000000002Q14.3 15.700000000000001 16.900000000000002 16.8" stroke="#2f2321" stroke-width="1.15" fill="none"/><ellipse cx="24.2" cy="19.5" rx="1.5" ry="0.75" fill="#3a2a25"/><path d="M21.599999999999998 16.900000000000002Q24.2 15.700000000000001 26.8 16.8" stroke="#2f2321" stroke-width="1.15" fill="none"/>
<rect x="10.4" y="17.4" width="7.6" height="3.9" rx="1" fill="none" stroke="#6a4634" stroke-width="0.8"/><rect x="20.4" y="17.4" width="7.6" height="3.9" rx="1" fill="none" stroke="#6a4634" stroke-width="0.8"/>
<path d="M13.6 26.8 Q19 28 24.8 26.8 Q19.2 32.6 13.6 26.8Z" fill="#c98a80"/>
<path d="M14.6 27.4 Q19 28.4 23.8 27.4 Q19.2 31 14.6 27.4Z" fill="#f7eeea"/>
<path d="M2 45.7 L3 44.4 L11.6 39.4 L13 45.7Z" fill="#1b1e27"/>
<path d="M27.4 45.7 L29.6 37.4 L40.8 42.4 L40.8 45.7Z" fill="#1b1e27"/>
</g></g></g>
<g fill="none" stroke="#ad4a47" stroke-width="1.15" stroke-linecap="round"><path d="M273.55 783.00V780.05a3 3 0 0 1 6 0V781.10"/><rect x="271.5" y="783.10" width="9.8" height="5.7" rx="1.3"/></g>
<rect x="524" y="780.85" width="74" height="27.3" rx="2.2" fill="#f0ad4e"/>
<rect x="619" y="780.85" width="66.8" height="27.3" rx="2.2" fill="#5cb85c"/>
<rect x="707" y="780.85" width="55.4" height="27.3" rx="2.2" fill="#86c986"/>
<path transform="translate(809.5 797.10)" d="M-3.6 -3.6L3.6 3.6M3.6 -3.6L-3.6 3.6" stroke="#a94442" stroke-width="1.75" fill="none"/>
<path transform="translate(873.5 797.10)" d="M-3.6 -3.6L3.6 3.6M3.6 -3.6L-3.6 3.6" stroke="#a94442" stroke-width="1.75" fill="none"/>
<path transform="translate(944.0 797.10)" d="M-3.6 -3.6L3.6 3.6M3.6 -3.6L-3.6 3.6" stroke="#a94442" stroke-width="1.75" fill="none"/>
<g transform="translate(48 774.90)"><defs><clipPath id="ac9"><rect width="44" height="45.7" rx="3"/></clipPath><filter id="ab9" x="-10%" y="-10%" width="120%" height="120%"><feGaussianBlur stdDeviation="0.6"/></filter><radialGradient id="rg9" cx="0.45" cy="0.4" r="0.62"><stop offset="0" stop-color="#c98570"/><stop offset="0.6" stop-color="#b56d56"/><stop offset="1" stop-color="#8a4a3a"/></radialGradient></defs><g clip-path="url(#ac9)"><g filter="url(#ab9)">
<path d="M6.8 45.7 Q4.8 20 11 9 Q17 2 22 2.6 Q30 3 34.2 12 Q38.2 24 37.2 45.7Z" fill="#3a2524"/>
<path d="M15.6 30 L15.6 45.7 L27.4 45.7 L27.4 30Z" fill="#a3624d"/>
<ellipse cx="21.5" cy="19.6" rx="10" ry="13.8" fill="url(#rg9)"/>
<ellipse cx="21.5" cy="12.5" rx="6" ry="4" fill="#c98570" opacity="0.6"/>
<ellipse cx="16.8" cy="17.2" rx="1.9" ry="1.0" fill="#1e1412"/><path d="M14.200000000000001 14.9Q16.8 13.7 19.400000000000002 14.799999999999999" stroke="#2a1a18" stroke-width="1.15" fill="none"/><ellipse cx="26.5" cy="17.4" rx="1.9" ry="1.0" fill="#1e1412"/><path d="M23.9 15.1Q26.5 13.899999999999999 29.1 14.999999999999998" stroke="#2a1a18" stroke-width="1.15" fill="none"/>
<path d="M19.8 22 Q21.5 23.4 23.4 22" stroke="#8d4f3e" stroke-width="0.9" fill="none"/>
<path d="M15.6 25.2 Q21.5 26.6 27.4 25.2 Q21.5 31.2 15.6 25.2Z" fill="#8b4438"/>
<path d="M16.6 25.8 Q21.5 27 26.4 25.8 Q21.5 29.6 16.6 25.8Z" fill="#fbf5f2"/>
</g></g></g></svg>
<span class="t" style="left:859.80px;top:57px;font-size:10.5px;color:#a8a8a8;font-weight:400;letter-spacing:0.201px;">Julie Morris</span>
<span class="t" style="left:40.80px;top:90px;font-size:11px;color:#337ab7;font-weight:400;letter-spacing:-0.286px;">Home</span>
<span class="t" style="left:87.10px;top:90px;font-size:11px;color:#337ab7;font-weight:400;letter-spacing:-0.895px;">HR</span>
<span class="t" style="left:118.80px;top:90px;font-size:11px;color:#337ab7;font-weight:400;letter-spacing:-0.060px;">Talent</span>
<span class="t" style="left:165.40px;top:90px;font-size:11px;color:#337ab7;font-weight:400;letter-spacing:-0.120px;">Meeting</span>
<span class="t" style="left:221.30px;top:90px;font-size:11px;color:#337ab7;font-weight:400;letter-spacing:-0.208px;">Sales Succession</span>
<span class="t" style="left:942.00px;top:92px;font-size:9.6px;color:#2f74b5;font-weight:400;letter-spacing:0.265px;-webkit-text-stroke:0.3px #2f74b5;">Talent</span>
<span class="t" style="left:40.40px;top:121px;font-size:22px;color:#262626;font-weight:400;letter-spacing:-0.804px;-webkit-text-stroke:0.3px #fff;">Sales Succession</span>
<span class="t" style="left:427.20px;top:126px;font-size:11.5px;color:#3071b5;font-weight:400;letter-spacing:-0.228px;-webkit-text-stroke:0.35px #3071b5;">Reviewees</span>
<span class="t" style="left:508.70px;top:126px;font-size:11.5px;color:#4a86c4;font-weight:400;letter-spacing:-0.066px;">Analysis</span>
<span class="t" style="left:578.20px;top:126px;font-size:11.5px;color:#4a86c4;font-weight:400;letter-spacing:0.065px;">Status</span>
<span class="t" style="left:637.60px;top:126px;font-size:11.5px;color:#4a86c4;font-weight:400;letter-spacing:0.136px;">Assessment</span>
<span class="t" style="left:728.40px;top:126px;font-size:11.5px;color:#4a86c4;font-weight:400;letter-spacing:-0.249px;">9-Box</span>
<span class="t" style="left:784.40px;top:126px;font-size:11.5px;color:#4a86c4;font-weight:400;letter-spacing:-0.035px;">Action Plan</span>
<span class="t" style="left:869.40px;top:126px;font-size:11.5px;color:#4a86c4;font-weight:400;letter-spacing:-0.286px;">Release</span>
<span class="t" style="left:936.70px;top:126px;font-size:11.5px;color:#4a86c4;font-weight:400;letter-spacing:-0.142px;">Export</span>
<span class="t" style="left:40.60px;top:161px;font-size:15.4px;color:#2a2a2a;font-weight:400;letter-spacing:-0.631px;-webkit-text-stroke:0.22px #fff;">Reviewees</span>
<span class="t" style="left:118.80px;top:165px;font-size:11px;color:#337ab7;font-weight:400;letter-spacing:-0.037px;">Admin</span>
<span class="t" style="left:40.50px;top:193px;font-size:11px;color:#333;font-weight:400;letter-spacing:-0.130px;">Showing 1 to 20 of 26 entries</span>
<span class="t" style="left:483.30px;top:190px;font-size:11px;color:#333;font-weight:400;letter-spacing:-0.346px;">Search:</span>
<span class="t" style="left:907.50px;top:192px;font-size:11px;color:#333;font-weight:400;letter-spacing:-0.441px;">Excel</span>
<span class="t" style="left:953.50px;top:192px;font-size:11px;color:#333;font-weight:400;letter-spacing:-0.900px;">PDF</span>
<span class="t" style="left:48.20px;top:222px;font-size:11px;color:#333;font-weight:400;letter-spacing:-0.378px;">Employee</span>
<span class="t" style="left:185.30px;top:222px;font-size:11px;color:#333;font-weight:400;letter-spacing:-0.175px;">Manager</span>
<span class="t" style="left:300.60px;top:222px;font-size:11px;color:#333;font-weight:400;letter-spacing:-0.376px;">Group</span>
<span class="t" style="left:387.30px;top:222px;font-size:11px;color:#333;font-weight:400;letter-spacing:-0.189px;">Current Job</span>
<span class="t" style="left:524.90px;top:222px;font-size:11px;color:#333;font-weight:400;letter-spacing:-0.126px;">Performance</span>
<span class="t" style="left:625.60px;top:222px;font-size:11px;color:#333;font-weight:400;letter-spacing:-0.012px;">Potential</span>
<span class="t" style="left:716.00px;top:222px;font-size:11px;color:#333;font-weight:400;letter-spacing:-0.450px;">9-Box</span>
<span class="t" style="left:789.00px;top:222px;font-size:11px;color:#333;font-weight:400;letter-spacing:-0.287px;">Note</span>
<span class="t" style="left:849.00px;top:222px;font-size:11px;color:#333;font-weight:400;letter-spacing:-0.030px;">Action</span>
<span class="t" style="left:913.30px;top:222px;font-size:11px;color:#333;font-weight:400;letter-spacing:-0.423px;">Released</span>
<span class="t" style="left:101.90px;top:250px;font-size:11px;color:#337ab7;font-weight:400;letter-spacing:-0.275px;">Abraham,</span>
<span class="t" style="left:101.90px;top:265px;font-size:11px;color:#337ab7;font-weight:400;letter-spacing:-0.299px;">Andrew</span>
<span class="t" style="left:185.70px;top:250px;font-size:11px;color:#333;font-weight:400;letter-spacing:-0.305px;">Marr, Rachel</span>
<span class="t" style="left:300.60px;top:250px;font-size:11px;color:#333;font-weight:400;letter-spacing:-0.233px;">Franchise</span>
<span class="t" style="left:300.60px;top:265px;font-size:11px;color:#333;font-weight:400;letter-spacing:-0.376px;">Group</span>
<span class="t" style="left:387.30px;top:250px;font-size:11px;color:#337ab7;font-weight:400;letter-spacing:-0.147px;">Support</span>
<span class="t" style="left:546.91px;top:262px;font-size:11px;color:#fff;font-weight:400;letter-spacing:-0.300px;-webkit-text-stroke:0.35px #fff;">Below</span>
<span class="t" style="left:641.79px;top:262px;font-size:11px;color:#fff;font-weight:400;letter-spacing:-0.283px;-webkit-text-stroke:0.35px #fff;">High</span>
<span class="t" style="left:731.94px;top:262px;font-size:11px;color:#fff;font-weight:400;letter-spacing:-0.306px;-webkit-text-stroke:0.35px #fff;">3</span>
<span class="t" style="left:101.90px;top:309px;font-size:11px;color:#337ab7;font-weight:400;letter-spacing:-0.299px;">Alsop, Lee aa</span>
<span class="t" style="left:101.90px;top:324px;font-size:11px;color:#337ab7;font-weight:400;letter-spacing:-0.400px;">xxx</span>
<span class="t" style="left:185.70px;top:309px;font-size:11px;color:#333;font-weight:400;letter-spacing:-0.470px;">Kelly, Reese</span>
<span class="t" style="left:300.60px;top:309px;font-size:11px;color:#333;font-weight:400;letter-spacing:-0.315px;">Central Group</span>
<span class="t" style="left:387.30px;top:309px;font-size:11px;color:#337ab7;font-weight:400;letter-spacing:-0.147px;">Support</span>
<span class="t" style="left:546.91px;top:321px;font-size:11px;color:#fff;font-weight:400;letter-spacing:-0.300px;-webkit-text-stroke:0.35px #fff;">Meets</span>
<span class="t" style="left:641.79px;top:321px;font-size:11px;color:#fff;font-weight:400;letter-spacing:-0.283px;-webkit-text-stroke:0.35px #fff;">High</span>
<span class="t" style="left:731.94px;top:321px;font-size:11px;color:#fff;font-weight:400;letter-spacing:-0.306px;-webkit-text-stroke:0.35px #fff;">4</span>
<span class="t" style="left:101.90px;top:367px;font-size:11px;color:#337ab7;font-weight:400;letter-spacing:-0.228px;">Anderson,</span>
<span class="t" style="left:101.90px;top:382px;font-size:11px;color:#337ab7;font-weight:400;letter-spacing:-0.198px;">Jules</span>
<span class="t" style="left:185.70px;top:367px;font-size:11px;color:#333;font-weight:400;letter-spacing:-0.141px;">Jones, Stuart</span>
<span class="t" style="left:300.60px;top:367px;font-size:11px;color:#333;font-weight:400;letter-spacing:-0.233px;">Franchise</span>
<span class="t" style="left:300.60px;top:382px;font-size:11px;color:#333;font-weight:400;letter-spacing:-0.376px;">Group</span>
<span class="t" style="left:387.30px;top:367px;font-size:11px;color:#337ab7;font-weight:400;letter-spacing:-0.163px;">Programmer</span>
<span class="t" style="left:546.91px;top:379px;font-size:11px;color:#fff;font-weight:400;letter-spacing:-0.300px;-webkit-text-stroke:0.35px #fff;">Meets</span>
<span class="t" style="left:641.79px;top:379px;font-size:11px;color:#fff;font-weight:400;letter-spacing:-0.283px;-webkit-text-stroke:0.35px #fff;">High</span>
<span class="t" style="left:731.94px;top:379px;font-size:11px;color:#fff;font-weight:400;letter-spacing:-0.306px;-webkit-text-stroke:0.35px #fff;">4</span>
<span class="t" style="left:101.90px;top:426px;font-size:11px;color:#337ab7;font-weight:400;letter-spacing:-0.223px;">Andrews, Nick</span>
<span class="t" style="left:185.70px;top:426px;font-size:11px;color:#333;font-weight:400;letter-spacing:-0.430px;">Reith, Sarah</span>
<span class="t" style="left:300.60px;top:426px;font-size:11px;color:#333;font-weight:400;letter-spacing:-0.446px;">Sales</span>
<span class="t" style="left:387.30px;top:426px;font-size:11px;color:#337ab7;font-weight:400;letter-spacing:-0.124px;">Comptroller</span>
<span class="t" style="left:546.91px;top:438px;font-size:11px;color:#fff;font-weight:400;letter-spacing:-0.300px;-webkit-text-stroke:0.35px #fff;">Meets</span>
<span class="t" style="left:633.64px;top:438px;font-size:11px;color:#fff;font-weight:400;letter-spacing:-0.248px;-webkit-text-stroke:0.35px #fff;">At Level</span>
<span class="t" style="left:731.94px;top:438px;font-size:11px;color:#fff;font-weight:400;letter-spacing:-0.306px;-webkit-text-stroke:0.35px #fff;">2</span>
<span class="t" style="left:101.90px;top:485px;font-size:11px;color:#337ab7;font-weight:400;letter-spacing:-0.346px;">Barnes,</span>
<span class="t" style="left:101.90px;top:499px;font-size:11px;color:#337ab7;font-weight:400;letter-spacing:-0.316px;">Claudia</span>
<span class="t" style="left:185.70px;top:485px;font-size:11px;color:#333;font-weight:400;letter-spacing:-0.203px;">Simmonds,</span>
<span class="t" style="left:185.70px;top:499px;font-size:11px;color:#333;font-weight:400;letter-spacing:-0.341px;">Karl</span>
<span class="t" style="left:300.60px;top:485px;font-size:11px;color:#333;font-weight:400;letter-spacing:-0.205px;">Business</span>
<span class="t" style="left:300.60px;top:499px;font-size:11px;color:#333;font-weight:400;letter-spacing:-0.212px;">Development</span>
<span class="t" style="left:387.30px;top:485px;font-size:11px;color:#337ab7;font-weight:400;letter-spacing:-0.166px;">Regional Director of</span>
<span class="t" style="left:387.30px;top:499px;font-size:11px;color:#337ab7;font-weight:400;letter-spacing:-0.446px;">Sales</span>
<span class="t" style="left:546.33px;top:497px;font-size:11px;color:#fff;font-weight:400;letter-spacing:-0.312px;-webkit-text-stroke:0.35px #fff;">Above</span>
<span class="t" style="left:641.79px;top:497px;font-size:11px;color:#fff;font-weight:400;letter-spacing:-0.283px;-webkit-text-stroke:0.35px #fff;">High</span>
<span class="t" style="left:731.94px;top:497px;font-size:11px;color:#fff;font-weight:400;letter-spacing:-0.306px;-webkit-text-stroke:0.35px #fff;">5</span>
<span class="t" style="left:101.90px;top:543px;font-size:11px;color:#337ab7;font-weight:400;letter-spacing:-0.296px;">Bracewell, Les</span>
<span class="t" style="left:185.70px;top:543px;font-size:11px;color:#333;font-weight:400;letter-spacing:-0.299px;">Sherwood,</span>
<span class="t" style="left:185.70px;top:558px;font-size:11px;color:#333;font-weight:400;letter-spacing:-0.239px;">Alexander</span>
<span class="t" style="left:300.60px;top:543px;font-size:11px;color:#333;font-weight:400;letter-spacing:-0.446px;">Sales</span>
<span class="t" style="left:387.30px;top:543px;font-size:11px;color:#337ab7;font-weight:400;letter-spacing:-0.203px;">VP, Business Analytics</span>
<span class="t" style="left:546.33px;top:555px;font-size:11px;color:#fff;font-weight:400;letter-spacing:-0.312px;-webkit-text-stroke:0.35px #fff;">Above</span>
<span class="t" style="left:637.43px;top:555px;font-size:11px;color:#fff;font-weight:400;letter-spacing:-0.265px;-webkit-text-stroke:0.35px #fff;">Future</span>
<span class="t" style="left:731.94px;top:555px;font-size:11px;color:#fff;font-weight:400;letter-spacing:-0.306px;-webkit-text-stroke:0.35px #fff;">4</span>
<span class="t" style="left:101.90px;top:602px;font-size:11px;color:#337ab7;font-weight:400;letter-spacing:-0.257px;">Butcher,</span>
<span class="t" style="left:101.90px;top:617px;font-size:11px;color:#337ab7;font-weight:400;letter-spacing:-0.037px;">Morrison</span>
<span class="t" style="left:185.70px;top:602px;font-size:11px;color:#333;font-weight:400;letter-spacing:-0.254px;">Gerrard, Matt</span>
<span class="t" style="left:300.60px;top:602px;font-size:11px;color:#333;font-weight:400;letter-spacing:-0.446px;">Sales</span>
<span class="t" style="left:387.30px;top:602px;font-size:11px;color:#337ab7;font-weight:400;letter-spacing:-0.268px;">Manager, Business</span>
<span class="t" style="left:387.30px;top:617px;font-size:11px;color:#337ab7;font-weight:400;letter-spacing:-0.337px;">Analytics</span>
<span class="t" style="left:546.91px;top:614px;font-size:11px;color:#fff;font-weight:400;letter-spacing:-0.300px;-webkit-text-stroke:0.35px #fff;">Below</span>
<span class="t" style="left:637.43px;top:614px;font-size:11px;color:#fff;font-weight:400;letter-spacing:-0.265px;-webkit-text-stroke:0.35px #fff;">Future</span>
<span class="t" style="left:731.94px;top:614px;font-size:11px;color:#fff;font-weight:400;letter-spacing:-0.306px;-webkit-text-stroke:0.35px #fff;">2</span>
<span class="t" style="left:101.90px;top:661px;font-size:11px;color:#337ab7;font-weight:400;letter-spacing:-0.302px;">Davidson,</span>
<span class="t" style="left:101.90px;top:675px;font-size:11px;color:#337ab7;font-weight:400;letter-spacing:-0.085px;">Julia</span>
<span class="t" style="left:185.70px;top:661px;font-size:11px;color:#333;font-weight:400;letter-spacing:-0.100px;">Morris, Julie</span>
<span class="t" style="left:300.60px;top:661px;font-size:11px;color:#333;font-weight:400;letter-spacing:-0.446px;">Sales</span>
<span class="t" style="left:387.30px;top:661px;font-size:11px;color:#337ab7;font-weight:400;letter-spacing:-0.155px;">Sr Financial Analyst</span>
<span class="t" style="left:546.33px;top:672px;font-size:11px;color:#fff;font-weight:400;letter-spacing:-0.312px;-webkit-text-stroke:0.35px #fff;">Above</span>
<span class="t" style="left:641.79px;top:672px;font-size:11px;color:#fff;font-weight:400;letter-spacing:-0.283px;-webkit-text-stroke:0.35px #fff;">High</span>
<span class="t" style="left:731.94px;top:672px;font-size:11px;color:#fff;font-weight:400;letter-spacing:-0.306px;-webkit-text-stroke:0.35px #fff;">5</span>
<span class="t" style="left:101.90px;top:719px;font-size:11px;color:#337ab7;font-weight:400;letter-spacing:-0.254px;">Gerrard, Matt</span>
<span class="t" style="left:185.70px;top:719px;font-size:11px;color:#333;font-weight:400;letter-spacing:-0.100px;">Morris, Julie</span>
<span class="t" style="left:300.60px;top:719px;font-size:11px;color:#333;font-weight:400;letter-spacing:-0.446px;">Sales</span>
<span class="t" style="left:387.30px;top:719px;font-size:11px;color:#337ab7;font-weight:400;letter-spacing:-0.157px;">Sales Analyst</span>
<span class="t" style="left:546.91px;top:731px;font-size:11px;color:#fff;font-weight:400;letter-spacing:-0.300px;-webkit-text-stroke:0.35px #fff;">Below</span>
<span class="t" style="left:641.79px;top:731px;font-size:11px;color:#fff;font-weight:400;letter-spacing:-0.283px;-webkit-text-stroke:0.35px #fff;">High</span>
<span class="t" style="left:731.94px;top:731px;font-size:11px;color:#fff;font-weight:400;letter-spacing:-0.306px;-webkit-text-stroke:0.35px #fff;">3</span>
<span class="t" style="left:101.90px;top:778px;font-size:11px;color:#337ab7;font-weight:400;letter-spacing:-0.470px;">Green, Diana</span>
<span class="t" style="left:185.70px;top:778px;font-size:11px;color:#333;font-weight:400;letter-spacing:-0.100px;">Morris, Julie</span>
<span class="t" style="left:300.60px;top:778px;font-size:11px;color:#333;font-weight:400;letter-spacing:-0.446px;">Sales</span>
<span class="t" style="left:387.30px;top:778px;font-size:11px;color:#337ab7;font-weight:400;letter-spacing:-0.155px;">Sr Financial Analyst</span>
<span class="t" style="left:546.91px;top:790px;font-size:11px;color:#fff;font-weight:400;letter-spacing:-0.300px;-webkit-text-stroke:0.35px #fff;">Meets</span>
<span class="t" style="left:641.79px;top:790px;font-size:11px;color:#fff;font-weight:400;letter-spacing:-0.283px;-webkit-text-stroke:0.35px #fff;">High</span>
<span class="t" style="left:731.94px;top:790px;font-size:11px;color:#fff;font-weight:400;letter-spacing:-0.306px;-webkit-text-stroke:0.35px #fff;">4</span>
</body></html>
